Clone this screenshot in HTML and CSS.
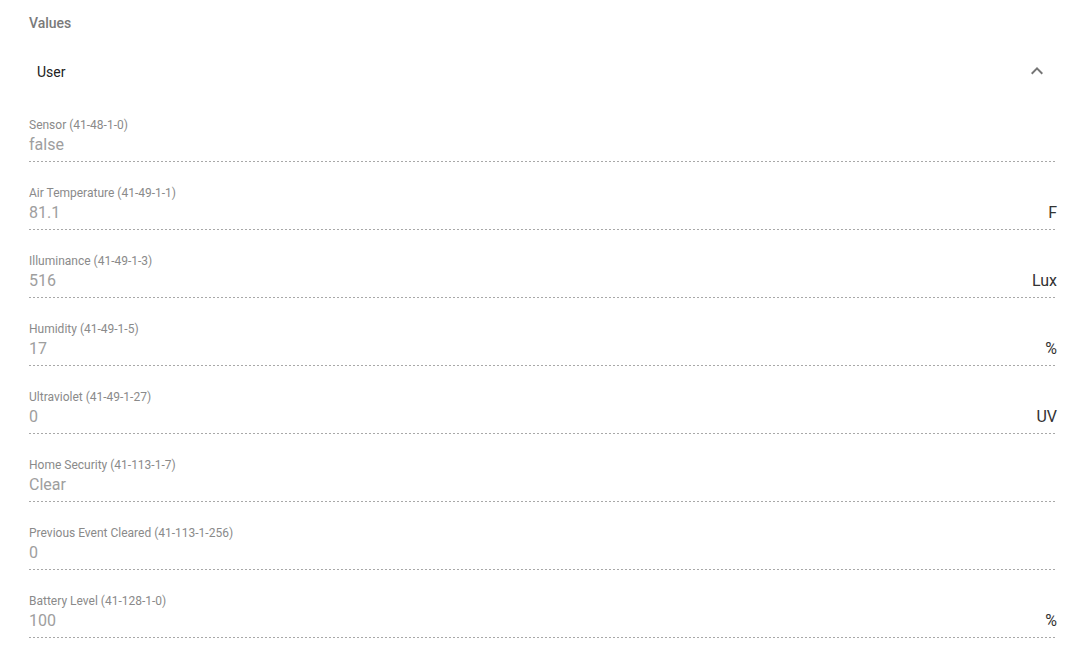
FILE: index.html
```html
<!DOCTYPE html>
<html>
<head>
<meta charset="utf-8">
<link rel="stylesheet" href="styles.css">
</head>
<body>
<div class="page">
  <div class="section-title">Values</div>
  <div class="group-row">
    <span class="group-name">User</span>
    <svg class="chev" viewBox="0 0 24 24" width="24" height="24"><path d="M12 8l-6 6 1.41 1.41L12 10.83l4.59 4.58L18 14z"/></svg>
  </div>
  <div class="fields">
    <div class="field"><div class="label">Sensor (41-48-1-0)</div><div class="line"><span class="value">false</span></div></div>
    <div class="field"><div class="label">Air Temperature (41-49-1-1)</div><div class="line"><span class="value">81.1</span><span class="unit">F</span></div></div>
    <div class="field"><div class="label">Illuminance (41-49-1-3)</div><div class="line"><span class="value">516</span><span class="unit">Lux</span></div></div>
    <div class="field"><div class="label">Humidity (41-49-1-5)</div><div class="line"><span class="value">17</span><span class="unit">%</span></div></div>
    <div class="field"><div class="label">Ultraviolet (41-49-1-27)</div><div class="line"><span class="value">0</span><span class="unit">UV</span></div></div>
    <div class="field"><div class="label">Home Security (41-113-1-7)</div><div class="line"><span class="value">Clear</span></div></div>
    <div class="field"><div class="label">Previous Event Cleared (41-113-1-256)</div><div class="line"><span class="value">0</span></div></div>
    <div class="field"><div class="label">Battery Level (41-128-1-0)</div><div class="line"><span class="value">100</span><span class="unit">%</span></div></div>
  </div>
</div>
</body>
</html>
```
FILE: styles.css
```css
html, body {
  margin: 0;
  padding: 0;
  background: #ffffff;
}
body {
  font-family: Roboto, "Noto Sans", sans-serif;
  -webkit-font-smoothing: antialiased;
}
.page {
  padding: 13px 33px 0 29px;
}
.section-title {
  font-size: 14px;
  font-weight: 500;
  line-height: 20px;
  color: #7a7a7a;
}
.group-row {
  margin-top: 15px;
  height: 48px;
  display: flex;
  align-items: center;
  justify-content: space-between;
  padding: 0 8px;
}
.group-name {
  font-size: 14px;
  line-height: 20px;
  color: #212121;
}
.chev {
  fill: #757575;
  margin-top: -2px;
}
.fields {
  padding-top: 20px;
}
.field {
  padding-bottom: 22px;
}
.label {
  font-size: 12px;
  line-height: 16px;
  padding-top: 1px;
  color: #8a8a8a;
}
.line {
  display: flex;
  justify-content: space-between;
  align-items: center;
  height: 24px;
  padding-bottom: 5px;
  background-image: linear-gradient(to right, #a8a8a8 50%, transparent 50%);
  background-size: 4px 1px;
  background-repeat: repeat-x;
  background-position: left bottom;
}
.value {
  font-size: 16px;
  line-height: 24px;
  color: #9e9e9e;
}
.unit {
  font-size: 16px;
  line-height: 24px;
  color: #333333;
}
```
